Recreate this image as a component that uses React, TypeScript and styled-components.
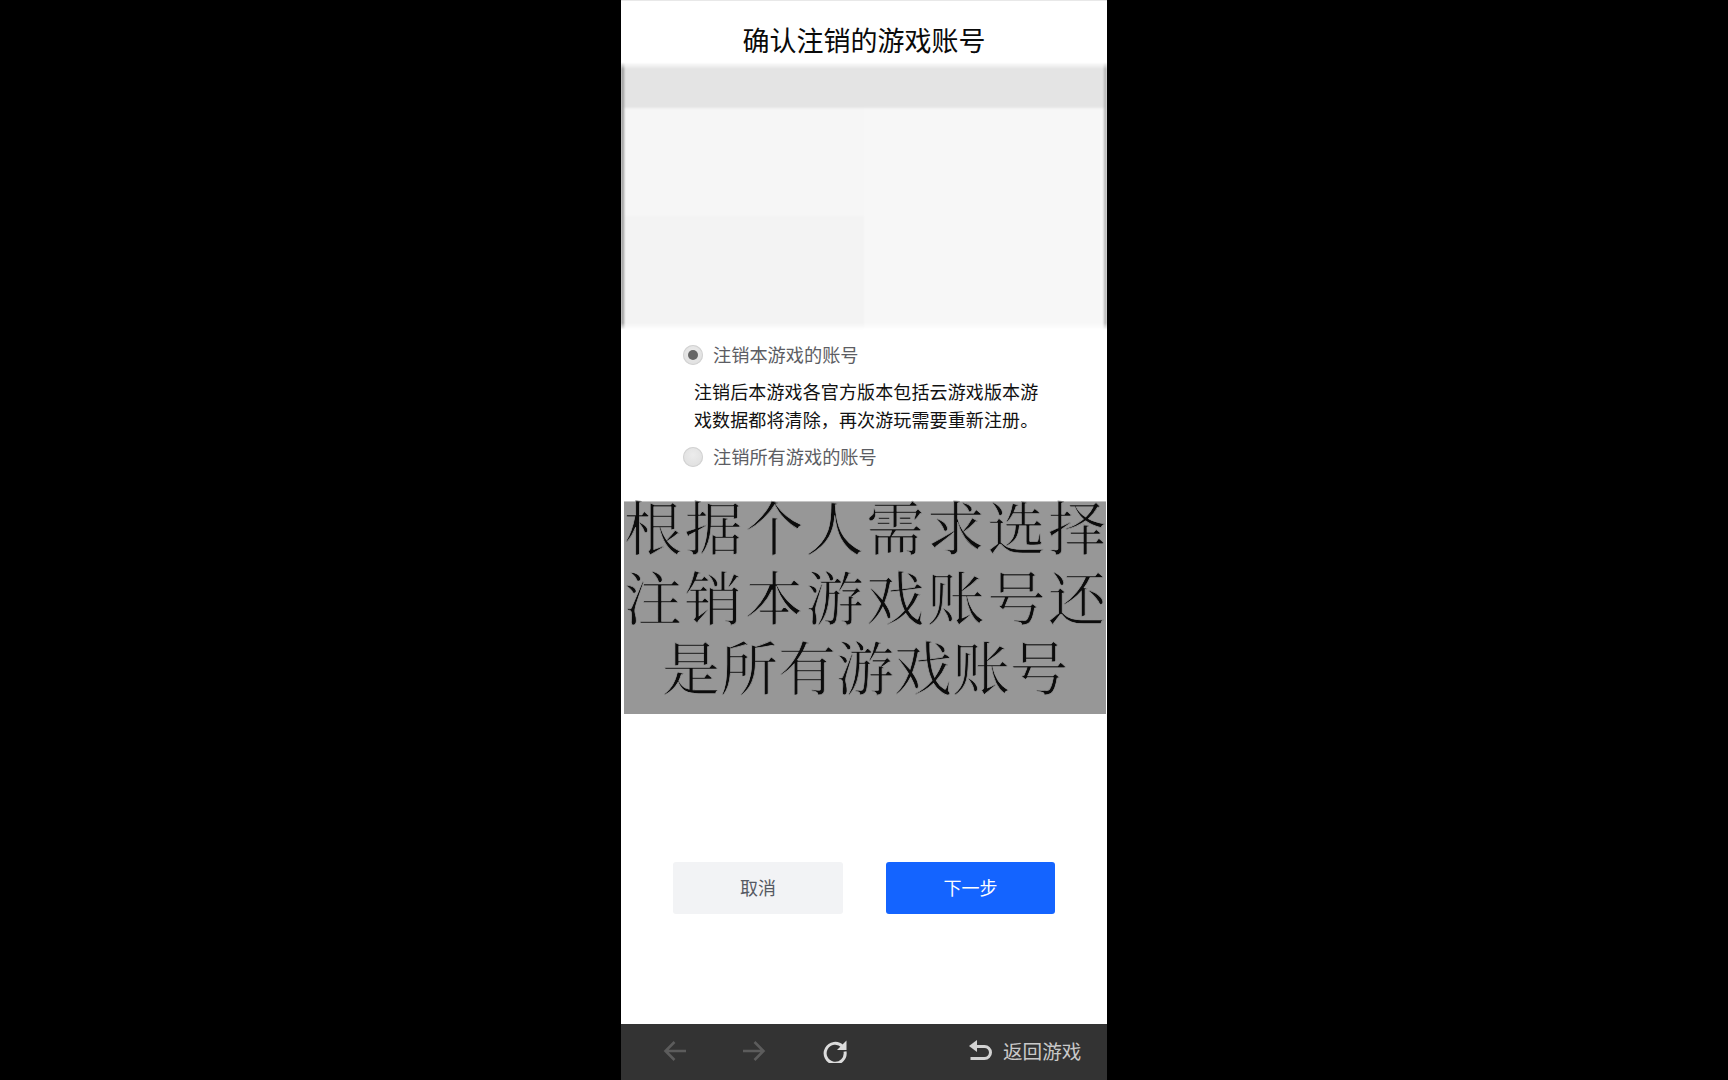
import React from "react";
import styled, { createGlobalStyle } from "styled-components";

const Global = createGlobalStyle`
  html, body { margin: 0; padding: 0; background: #000; height: 100%; }
  #root { height: 100%; }
  * { box-sizing: border-box; }
`;

const Stage = styled.div`
  height: 1080px;
  display: flex;
  justify-content: center;
  background: #000;
  font-family: "Noto Sans CJK SC", "Liberation Sans", sans-serif;
`;

const Phone = styled.div`
  width: 486px;
  height: 1080px;
  display: flex;
  flex-direction: column;
  background: #fff;
  border-top: 1px solid #e8e8e8;
  overflow: hidden;
`;

const Title = styled.h1`
  margin: 0;
  height: 61px;
  padding-top: 16px;
  display: flex;
  align-items: center;
  justify-content: center;
  font-size: 27px;
  font-weight: 400;
  color: #0a0a0a;
`;

const BlurredPanel = styled.div`
  height: 268px;
  display: flex;
  flex-direction: column;
  border-left: 3px solid #9a9a9a;
  border-right: 3px solid #b4b4b4;
  filter: blur(1.2px);
  mask-image: linear-gradient(to bottom, transparent, #000 7px, #000 calc(100% - 7px), transparent);
`;

const PanelBand = styled.div`
  height: 46px;
  background: #e4e4e4;
`;

const PanelBody = styled.div`
  flex: 1;
  display: grid;
  grid-template-columns: 240px 1fr;
  background: #f7f7f7;
`;

const PanelColumn = styled.div`
  display: flex;
  flex-direction: column;
`;

const PanelCell = styled.div<{ $tone: string; $grow?: number }>`
  flex: ${(p) => p.$grow ?? 1};
  background: ${(p) => p.$tone};
`;

const Options = styled.div`
  padding: 12px 0 0 62px;
  display: flex;
  flex-direction: column;
`;

const OptionRow = styled.label`
  display: flex;
  align-items: center;
  gap: 10px;
  height: 26px;
  font-size: 18.2px;
  color: #5c5d63;
`;

const OptionLabel = styled.span`
  margin-top: -2px;
`;

const Radio = styled.span<{ $checked?: boolean }>`
  width: 20px;
  height: 20px;
  border-radius: 50%;
  display: flex;
  align-items: center;
  justify-content: center;
  background: radial-gradient(circle at 50% 40%, #ececec, #dcdcdc);
  box-shadow: inset 0 0 0 1px #d2d2d2;
  &::after {
    content: "";
    width: 10px;
    height: 10px;
    border-radius: 50%;
    background: ${(p) => (p.$checked ? "#666" : "transparent")};
  }
`;

const Description = styled.p`
  margin: 9px 0 11px 11px;
  width: 352px;
  font-size: 18px;
  letter-spacing: 0.12px;
  line-height: 28px;
  color: #111;
`;

const Notice = styled.div`
  margin: 31px 1px 0 3px;
  height: 213px;
  background: #979797;
  border-top: 1px solid #c4c4c4;
`;

const NoticeText = styled.p`
  margin: -12px 0 0;
  font-family: "Noto Serif CJK SC", "Noto Sans CJK SC", serif;
  font-size: 58px;
  line-height: 70px;
  text-align: justify;
  text-align-last: center;
  color: #0c0c0c;
  -webkit-text-stroke: 0.7px #979797;
`;

const Actions = styled.div`
  margin-top: 148px;
  padding: 0 52px;
  display: flex;
  justify-content: space-between;
`;

const Button = styled.button<{ $primary?: boolean }>`
  width: ${(p) => (p.$primary ? 169 : 170)}px;
  height: 52px;
  padding: 0 0 3px;
  border: none;
  border-radius: 3px;
  font-family: inherit;
  font-size: 18px;
  background: ${(p) => (p.$primary ? "#1464ff" : "#f2f3f5")};
  color: ${(p) => (p.$primary ? "#fff" : "#565a63")};
`;

const Bar = styled.div`
  margin-top: auto;
  height: 56px;
  flex-shrink: 0;
  background: #333;
  display: flex;
  align-items: center;
  padding: 0 25px 2px 42px;
`;

const NavIcon = styled.svg<{ $gap: number }>`
  flex-shrink: 0;
  margin-right: ${(p) => p.$gap}px;
`;

const BackLabel = styled.span`
  margin: -2px 0 0 11px;
  font-size: 19.6px;
  color: #c9c9c9;
`;

export default function App() {
  return (
    <>
      <Global />
      <Stage>
        <Phone>
          <Title>确认注销的游戏账号</Title>
          <BlurredPanel>
            <PanelBand />
            <PanelBody>
              <PanelColumn>
                <PanelCell $tone="#f6f6f6" $grow={108} />
                <PanelCell $tone="#f3f3f3" $grow={114} />
              </PanelColumn>
              <PanelCell $tone="#f7f7f7" />
            </PanelBody>
          </BlurredPanel>
          <Options>
            <OptionRow>
              <Radio $checked />
              <OptionLabel>注销本游戏的账号</OptionLabel>
            </OptionRow>
            <Description>注销后本游戏各官方版本包括云游戏版本游戏数据都将清除，再次游玩需要重新注册。</Description>
            <OptionRow>
              <Radio />
              <OptionLabel>注销所有游戏的账号</OptionLabel>
            </OptionRow>
          </Options>
          <Notice>
            <NoticeText>根据个人需求选择注销本游戏账号还是所有游戏账号</NoticeText>
          </Notice>
          <Actions>
            <Button>取消</Button>
            <Button $primary>下一步</Button>
          </Actions>
          <Bar>
            <NavIcon $gap={55} width="24" height="22" viewBox="0 0 24 22" fill="none" stroke="#5c5c5c" strokeWidth="2.6">
              <path d="M23 11H3M11.5 2 2.5 11l9 9" />
            </NavIcon>
            <NavIcon $gap={57} width="24" height="22" viewBox="0 0 24 22" fill="none" stroke="#5c5c5c" strokeWidth="2.6">
              <path d="M1 11h20M12.5 2l9 9-9 9" />
            </NavIcon>
            <NavIcon $gap={121} width="24" height="24" viewBox="0 0 24 24" fill="none">
              <path d="M19.5 7.5A10 10 0 1 0 22 12.5" stroke="#dcdcdc" strokeWidth="3" />
              <path d="M23.5 1.5V11H14z" fill="#dcdcdc" />
            </NavIcon>
            <NavIcon $gap={0} width="24" height="24" viewBox="0 0 24 24" fill="none">
              <path d="M5 7.5h11.5a5.8 5.8 0 0 1 0 12H2.5" stroke="#d2d2d2" strokeWidth="3" />
              <path d="M9 1v12L1 7z" fill="#d2d2d2" />
            </NavIcon>
            <BackLabel>返回游戏</BackLabel>
          </Bar>
        </Phone>
      </Stage>
    </>
  );
}
